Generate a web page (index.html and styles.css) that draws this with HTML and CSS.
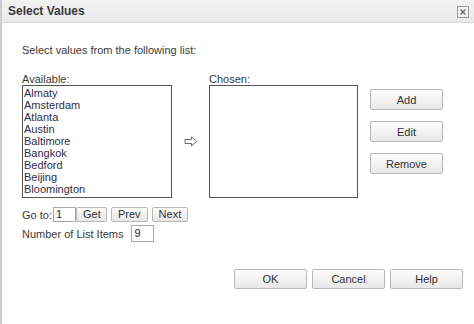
FILE: index.html
```html
<!DOCTYPE html>
<html lang="en">
<head>
  <meta charset="UTF-8">
  <meta name="viewport" content="width=device-width, initial-scale=1.0">
  <title>Select Values</title>
  <link rel="stylesheet" href="styles.css">
</head>
<body>
  <div class="dialog">
    <div class="titlebar">
      <span class="title">Select Values</span>
      <span class="close">
        <svg width="12" height="12" viewBox="0 0 12 12">
          <rect x="0.5" y="0.5" width="11" height="11" fill="#f4f4f4" stroke="#9a9a9a"/>
          <path d="M3.5 3.5 L8.5 8.5 M8.5 3.5 L3.5 8.5" stroke="#6a6a6a" stroke-width="1.4"/>
        </svg>
      </span>
    </div>
    <div class="content">
      <div class="intro">Select values from the following list:</div>
      <div class="lists">
        <div class="col">
          <div class="label">Available:</div>
          <div class="listbox">
            <div class="item">Almaty</div>
            <div class="item">Amsterdam</div>
            <div class="item">Atlanta</div>
            <div class="item">Austin</div>
            <div class="item">Baltimore</div>
            <div class="item">Bangkok</div>
            <div class="item">Bedford</div>
            <div class="item">Beijing</div>
            <div class="item">Bloomington</div>
          </div>
        </div>
        <div class="arrow">
          <svg width="14" height="11" viewBox="0 0 14 11">
            <path d="M1 3.5 H7.5 V1 L12.8 5.5 L7.5 10 V7.5 H1 Z" fill="#fff" stroke="#666" stroke-width="1"/>
          </svg>
        </div>
        <div class="col">
          <div class="label">Chosen:</div>
          <div class="listbox chosen"></div>
        </div>
        <div class="actions">
          <button class="btn">Add</button>
          <button class="btn">Edit</button>
          <button class="btn">Remove</button>
        </div>
      </div>
      <div class="goto">
        <span class="text">Go to:</span>
        <span class="field page">1</span>
        <button class="small get">Get</button>
        <button class="small">Prev</button>
        <button class="small">Next</button>
      </div>
      <div class="count">
        <span class="text">Number of List Items</span>
        <span class="field num">9</span>
      </div>
    </div>
    <div class="footer">
      <button class="btn">OK</button>
      <button class="btn">Cancel</button>
      <button class="btn">Help</button>
    </div>
  </div>
</body>
</html>
```

FILE: styles.css
```css
body {
  margin: 0;
  padding: 0;
  font-family: "Liberation Sans", Arial, sans-serif;
  font-size: 11px;
  color: #333;
  background-color: #fff;
}
.dialog {
  height: 324px;
  border-left: 2px solid #cdcdcd;
  box-sizing: border-box;
  display: flex;
  flex-direction: column;
}
.titlebar {
  height: 22px;
  border-bottom: 1px solid #d6d6d6;
  background: linear-gradient(#f3f3f3, #e9e9e9);
  display: flex;
  align-items: center;
  justify-content: space-between;
  padding: 0 5px 0 6px;
}
.title {
  font-size: 12px;
  font-weight: bold;
  color: #3a3a3a;
}
.close {
  display: flex;
  margin-top: 1px;
}
.content {
  padding: 21px 0 0 20px;
}
.intro {
  line-height: 13px;
  color: #3a3a3a;
}
.lists {
  display: flex;
  margin-top: 16px;
}
.label {
  line-height: 12px;
  color: #3a3a3a;
}
.listbox {
  width: 150px;
  height: 113px;
  border: 1px solid #555;
  box-sizing: border-box;
  padding: 1px 0 0 1px;
}
.listbox.chosen {
  width: 149px;
}
.item {
  line-height: 12px;
  color: #2e2e48;
}
.arrow {
  width: 37px;
  display: flex;
  align-items: center;
  justify-content: center;
  padding-top: 12px;
}
.actions {
  display: flex;
  flex-direction: column;
  gap: 11px;
  margin: 16px 0 0 12px;
}
.btn {
  width: 73px;
  height: 21px;
  padding: 0;
  border: 1px solid #b8b8b8;
  border-radius: 2px;
  background: linear-gradient(#fdfdfd, #e7e7e7);
  font-family: "Liberation Sans", Arial, sans-serif;
  font-size: 11px;
  color: #333;
}
.goto {
  display: flex;
  align-items: center;
  margin-top: 9px;
  height: 15px;
}
.text {
  color: #3a3a3a;
}
.field {
  box-sizing: border-box;
  border: 1px solid #a8a8a8;
  background-color: #fff;
  padding-left: 2px;
  line-height: 13px;
  color: #222;
}
.page {
  width: 23px;
  height: 15px;
  margin-left: 1px;
}
.small {
  height: 15px;
  padding: 0 6px;
  margin-left: 4px;
  border: 1px solid #b8b8b8;
  border-radius: 2px;
  background: linear-gradient(#fdfdfd, #e7e7e7);
  font-family: "Liberation Sans", Arial, sans-serif;
  font-size: 11px;
  color: #333;
  line-height: 11px;
}
.small.get {
  margin-left: 0;
  width: 31px;
}
.count {
  display: flex;
  align-items: center;
  margin-top: 3px;
  height: 17px;
}
.num {
  width: 23px;
  height: 17px;
  margin-left: 8px;
  line-height: 15px;
}
.footer {
  display: flex;
  justify-content: flex-end;
  gap: 5px;
  padding-right: 11px;
  margin-top: 27px;
}
.footer .btn {
  height: 20px;
}
```
